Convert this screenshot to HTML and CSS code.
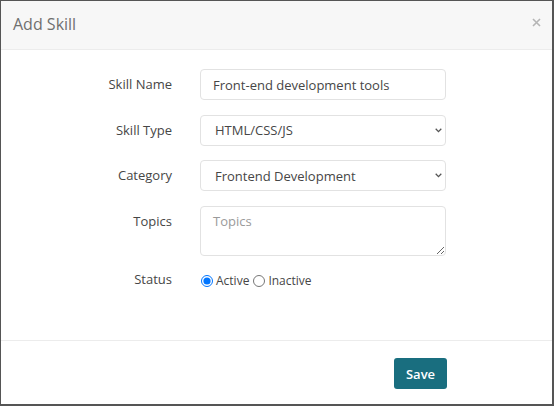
FILE: index.html
```html
<!DOCTYPE html>
<html lang="en">
<head>
<meta charset="utf-8">
<title>Add Skill</title>
<link rel="stylesheet" href="styles.css">
</head>
<body>
<div class="modal">
  <div class="modal-header">
    <h5 class="modal-title">Add Skill</h5>
    <button class="close" type="button" aria-label="Close">
      <svg width="9" height="9" viewBox="0 0 9 9"><path d="M1 1 L8 8 M8 1 L1 8" stroke="#b5b5b5" stroke-width="1.6" fill="none"/></svg>
    </button>
  </div>
  <div class="modal-body">
    <form class="form">
      <label class="lbl">Skill Name</label>
      <div class="ctl"><input class="input" type="text" value="Front-end development tools"></div>

      <label class="lbl">Skill Type</label>
      <div class="ctl select-wrap">
        <select class="input select"><option>HTML/CSS/JS</option></select>
        <svg class="chev" width="7" height="5" viewBox="0 0 7 5"><path d="M0.7 0.8 L3.5 3.6 L6.3 0.8" stroke="#555" stroke-width="1.3" fill="none"/></svg>
      </div>

      <label class="lbl">Category</label>
      <div class="ctl select-wrap">
        <select class="input select"><option>Frontend Development</option></select>
        <svg class="chev" width="7" height="5" viewBox="0 0 7 5"><path d="M0.7 0.8 L3.5 3.6 L6.3 0.8" stroke="#555" stroke-width="1.3" fill="none"/></svg>
      </div>

      <label class="lbl">Topics</label>
      <div class="ctl"><textarea class="input textarea" placeholder="Topics"></textarea></div>

      <label class="lbl lbl-status">Status</label>
      <div class="ctl radios">
        <label class="radio"><input type="radio" name="status" checked> Active</label>
        <label class="radio"><input type="radio" name="status"> Inactive</label>
      </div>
    </form>
  </div>
  <div class="modal-footer">
    <button class="btn-save" type="button">Save</button>
  </div>
</div>
</body>
</html>
```

FILE: styles.css
```css
html, body {
  margin: 0;
  padding: 0;
  background: #ffffff;
}

body {
  font-family: "Open Sans", "Liberation Sans", sans-serif;
  color: #464646;
}

.modal {
  box-sizing: border-box;
  width: 554px;
  height: 406px;
  border: 1px solid #555;
  border-right-width: 2px;
  border-bottom-width: 2px;
  display: flex;
  flex-direction: column;
  background: #fff;
}

.modal-header {
  box-sizing: border-box;
  height: 49px;
  flex: 0 0 49px;
  background: #f7f7f7;
  border-bottom: 1px solid #ececec;
  display: flex;
  align-items: center;
  justify-content: space-between;
  padding: 0 11px 0 12px;
}

.modal-title {
  margin: 0;
  font-size: 16px;
  font-weight: 400;
  color: #6f6f6f;
  line-height: 20px;
  padding-bottom: 2px;
}

.close {
  border: 0;
  background: transparent;
  padding: 0;
  width: 9px;
  height: 9px;
  display: flex;
  margin-bottom: 5px;
}

.modal-body {
  flex: 1;
  padding-top: 19px;
}

.form {
  display: grid;
  grid-template-columns: 171px 246px;
  column-gap: 28px;
  row-gap: 14.67px;
  margin: 0;
}

.lbl {
  font-size: 13px;
  line-height: 31px;
  text-align: right;
  color: #464646;
  align-self: start;
}

.lbl-status {
  line-height: 16px;
}

.ctl {
  position: relative;
}

.input {
  box-sizing: border-box;
  width: 246px;
  height: 31px;
  margin: 0;
  padding: 0 12px;
  border: 1px solid #e2e2e2;
  border-radius: 4px;
  background: #fff;
  font-family: "Open Sans", "Liberation Sans", sans-serif;
  font-size: 13px;
  color: #464646;
  outline: none;
  display: block;
}

.select {
  appearance: none;
  -webkit-appearance: none;
  padding-left: 14px;
}

.chev {
  position: absolute;
  right: 4px;
  top: 13px;
}

.textarea {
  height: 50px;
  padding: 5px 12px;
  line-height: 18px;
  resize: vertical;
}

.textarea::placeholder {
  color: #9a9a9a;
}

.radios {
  display: flex;
  align-items: center;
  align-self: start;
  gap: 3px;
  font-size: 12px;
  line-height: 16px;
  color: #464646;
  padding-top: 2px;
}

.radio {
  display: flex;
  align-items: center;
}

.radio input {
  width: 12px;
  height: 12px;
  margin: 0 3px 0 1px;
}

.modal-footer {
  box-sizing: border-box;
  flex: 0 0 64px;
  border-top: 1px solid #ececec;
  display: flex;
  justify-content: flex-end;
  align-items: flex-start;
  padding: 17px 105px 0 0;
}

.btn-save {
  box-sizing: border-box;
  width: 53px;
  height: 31px;
  border: 0;
  border-radius: 3px;
  background: #196e7f;
  color: #fff;
  font-family: "Open Sans", "Liberation Sans", sans-serif;
  font-size: 13px;
  font-weight: 600;
  padding: 0;
}
```
